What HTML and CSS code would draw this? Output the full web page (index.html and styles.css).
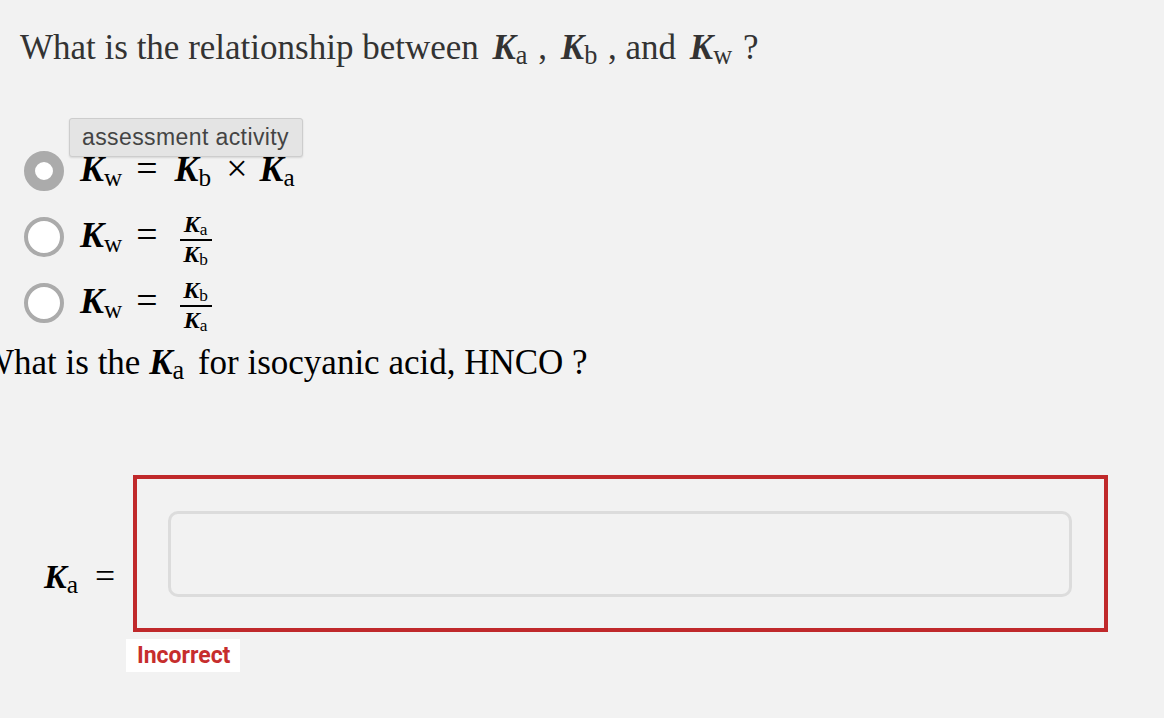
FILE: index.html
```html
<!DOCTYPE html>
<html lang="en">
<head>
    <meta charset="UTF-8">
    <meta name="viewport" content="width=device-width, initial-scale=1.0">
    <title>Assessment activity</title>
    <link rel="stylesheet" href="styles.css">
</head>

<body>
    <section class="question">
        <h1 class="prompt">What is the relationship between <span class="mi">K</span><span class="sub">a</span> , <span class="mi">K</span><span class="sub">b</span> , and <span class="mi">K</span><span class="sub">w</span> ?</h1>

        <div class="choices">
            <div class="tooltip">assessment activity</div>

            <label class="choice">
                <span class="radio checked"></span>
                <span class="math"><span class="mi">K</span><span class="sub">w</span><span class="op">=</span><span class="mi">K</span><span class="sub">b</span><span class="op op-times">×</span><span class="mi">K</span><span class="sub">a</span></span>
            </label>

            <label class="choice">
                <span class="radio"></span>
                <span class="math"><span class="mi">K</span><span class="sub">w</span><span class="op">=</span><span class="frac"><span class="num"><span class="mi">K</span><span class="sub">a</span></span><span class="bar"></span><span class="den"><span class="mi">K</span><span class="sub">b</span></span></span></span>
            </label>

            <label class="choice">
                <span class="radio"></span>
                <span class="math"><span class="mi">K</span><span class="sub">w</span><span class="op">=</span><span class="frac"><span class="num"><span class="mi">K</span><span class="sub">b</span></span><span class="bar"></span><span class="den"><span class="mi">K</span><span class="sub">a</span></span></span></span>
            </label>
        </div>
    </section>

    <section class="question question-two">
        <p class="prompt prompt-clipped">What is the <span class="mi">K</span><span class="sub">a</span> for isocyanic acid, HNCO ?</p>

        <div class="answer-row">
            <span class="answer-label"><span class="mi">K</span><span class="sub">a</span><span class="op">=</span></span>
            <div class="answer-field">
                <input class="answer-input" type="text">
            </div>
        </div>

        <div class="feedback">Incorrect</div>
    </section>
</body>
</html>
```

FILE: styles.css
```css
body {
    margin: 0;
    background-color: #f2f2f2;
    font-family: "Liberation Serif", "Times New Roman", serif;
    color: #333;
    overflow-x: hidden;
}

.question {
    padding-left: 20px;
}

.prompt {
    margin: 28px 0 0;
    font-size: 35px;
    line-height: 40px;
    font-weight: normal;
    white-space: nowrap;
}

/* math bits: bold italic K with plain subscript */
.mi {
    font-style: italic;
    font-weight: bold;
}

.sub {
    font-size: 0.75em;
    line-height: 1;
    vertical-align: -5px;
}

.prompt .mi {
    margin-left: 5px;
}

.prompt .sub {
    margin-right: 2px;
}

.op {
    font-size: 1.05em;
    line-height: 1;
    margin: 0 17px 0 14px;
}

.op-times {
    margin: 0 12px 0 15px;
}

.choices {
    position: relative;
    margin-top: 69px;
    margin-left: 4px;
}

.choice {
    display: flex;
    align-items: center;
    height: 66px;
    gap: 16px;
    cursor: pointer;
}

.radio {
    width: 40px;
    height: 40px;
    box-sizing: border-box;
    border-radius: 50%;
    border: 4px solid #ababab;
    background-color: #fff;
    flex-shrink: 0;
}

.radio.checked {
    border-width: 11px;
}

.math {
    height: 40px;
    padding-bottom: 4px;
    font-size: 36px;
    line-height: 40px;
    color: #000;
    white-space: nowrap;
}

.math .sub {
    font-size: 0.7em;
}

.frac {
    display: inline-flex;
    flex-direction: column;
    align-items: center;
    margin: -4px 0 0 5px;
    vertical-align: 15px;
    font-size: 24px;
    line-height: 24px;
}

.frac .sub {
    font-size: 0.72em;
    vertical-align: -3px;
}

.frac .bar {
    width: 32px;
    height: 2px;
    background-color: #000;
}

.frac .den {
    margin-top: 1px;
}

.tooltip {
    position: absolute;
    top: -20px;
    left: 45px;
    width: 220px;
    height: 37px;
    padding-left: 12px;
    background-color: #e4e4e4;
    border: 1px solid #cdcdcd;
    border-radius: 3px;
    box-shadow: 0 1px 2px rgba(0, 0, 0, 0.12);
    font-family: "Liberation Sans", Arial, sans-serif;
    font-size: 23px;
    line-height: 37px;
    letter-spacing: 0.4px;
    white-space: nowrap;
    color: #444;
    z-index: 10;
}

.question-two {
    padding-left: 0;
}

.prompt-clipped {
    margin: 7px 0 0 -19px;
    color: #000;
}

.prompt-clipped .mi {
    margin-left: 0;
}

.prompt-clipped .sub {
    margin-right: 5px;
}

.answer-row {
    display: flex;
    margin-top: 90px;
}

.answer-label {
    flex-shrink: 0;
    align-self: flex-end;
    width: 133px;
    box-sizing: border-box;
    margin: 0 0 34px;
    padding-left: 44px;
    font-size: 34px;
    line-height: 40px;
    color: #000;
    white-space: nowrap;
}

.answer-label .op {
    margin: 0 0 0 17px;
}

.answer-field {
    flex-shrink: 0;
    width: 975px;
    box-sizing: border-box;
    border: 4px solid #c0292b;
    padding: 32px 32px 31px 31px;
}

.answer-input {
    display: block;
    width: 100%;
    height: 86px;
    box-sizing: border-box;
    border: 3px solid #dcdcdc;
    border-radius: 10px;
    background: transparent;
    outline: none;
}

.feedback {
    display: inline-block;
    margin: 7px 0 0 126px;
    padding: 0 10px 0 11px;
    height: 33px;
    background-color: #fff;
    font-family: Roboto, "Liberation Sans", sans-serif;
    font-weight: bold;
    font-size: 23px;
    line-height: 34px;
    color: #c62d2d;
}
```
